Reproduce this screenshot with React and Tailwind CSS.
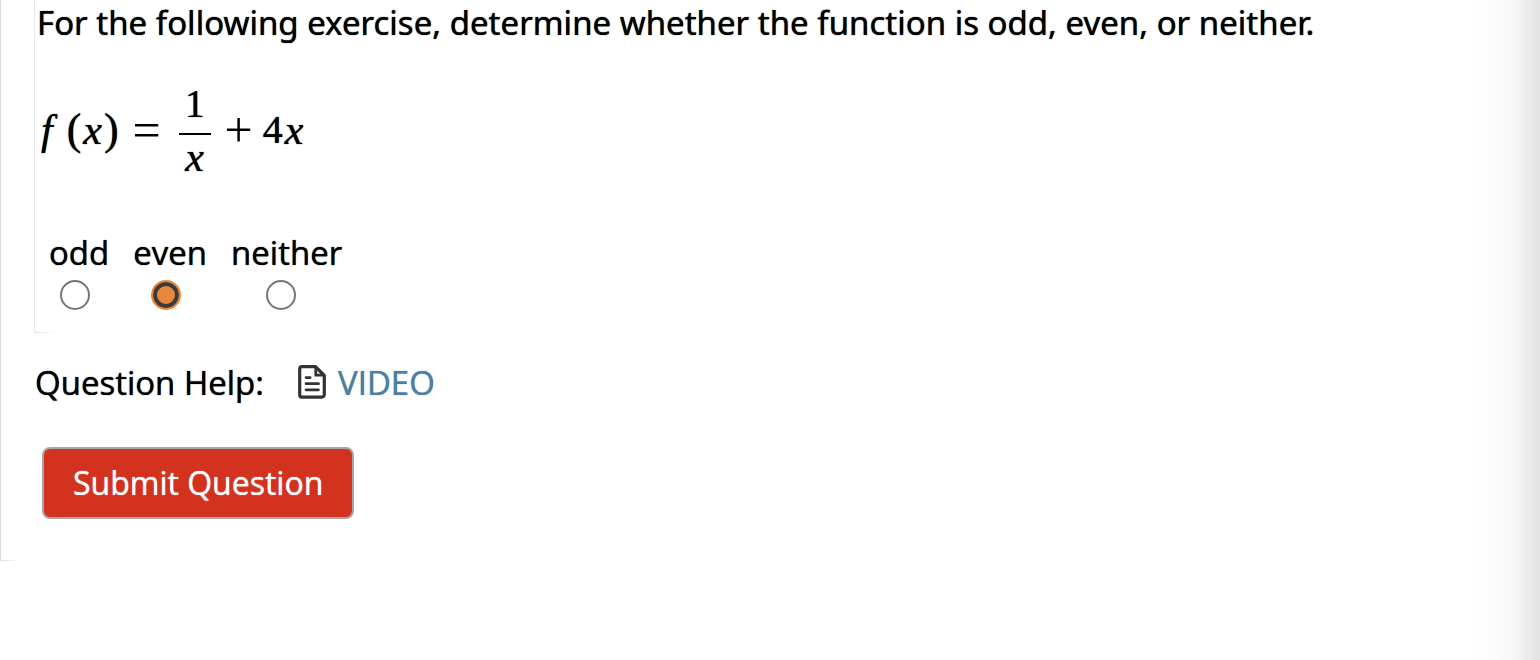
import { useState } from "react";

const choices = [
  { value: "odd", box: "pr-2" },
  { value: "even", box: "pr-2" },
  { value: "neither", box: "pr-3" },
];

function Formula() {
  return (
    <div
      role="math"
      aria-label="f(x) = 1/x + 4x"
      className="flex h-24 items-center pl-1 font-['Liberation_Serif',serif] text-[40px] leading-11 text-shadow-[0_0_1px_#000]"
    >
      <i className="pr-3.5 text-[42px] leading-11">f</i>
      <span className="text-[44px] leading-11">(</span>
      <i className="pr-0.5 pl-0.5 text-[42px] leading-11">x</i>
      <span className="text-[44px] leading-11">)</span>
      <span className="mr-1 w-14 text-center text-[50px] leading-11 text-shadow-none">=</span>
      <span className="flex w-8 flex-col items-center">
        <span className="pb-[7px]">1</span>
        <span className="h-0.5 w-full bg-black" />
        <i className="text-[42px] leading-11">x</i>
      </span>
      <span className="w-13 pl-1 text-center text-[50px] leading-11 text-shadow-none">+</span>
      <span>4</span>
      <i className="pl-0.5 text-[42px] leading-11">x</i>
    </div>
  );
}

function DocumentIcon() {
  return (
    <svg viewBox="0 0 28 34" className="h-[34px] w-7" fill="none" stroke="#333" aria-hidden="true">
      <path d="M4 1.7H17.5L26.3 10.5V29.8a2.3 2.3 0 0 1-2.3 2.3H4a2.3 2.3 0 0 1-2.3-2.3V4A2.3 2.3 0 0 1 4 1.7Z" strokeWidth="3.2" strokeLinejoin="round" />
      <path d="M17.8 2V10.2H26" strokeWidth="2.8" />
      <path d="M8 12.6h4.2M8 18.7h12.5M8 24.8h12.5" strokeWidth="2.7" strokeLinecap="round" />
    </svg>
  );
}

export default function App() {
  const [answer, setAnswer] = useState("even");
  return (
    <div className="flex min-h-screen justify-between bg-white font-['Open_Sans',sans-serif] text-[33px] leading-[46px] text-black">
      <main className="grow self-start">
        <div className="border-l border-[#dcdcdc] pb-[41px] pl-[33px]">
          <section className="border-l border-[#e8e8e8] pl-0.5">
            <h1 className="font-['Noto_Sans','Open_Sans',sans-serif] whitespace-nowrap text-shadow-[0_0_1px_#000]">
              For the following exercise, determine whether the function is odd, even, or neither.
            </h1>
            <div className="pt-9">
              <Formula />
            </div>
            <fieldset className="flex gap-6 pt-[52px] pb-[22px] pl-3">
              {choices.map(({ value, box }) => (
                <label key={value} className="flex flex-col items-center gap-1">
                  <span className="text-shadow-[0_0_1px_#000]">{value}</span>
                  <span className={`flex ${box}`}>
                    <input
                      type="radio"
                      name="parity"
                      value={value}
                      checked={answer === value}
                      onChange={() => setAnswer(value)}
                      className="size-[30px] appearance-none rounded-full border-2 border-[#757575] bg-white checked:border-[#e9873a] checked:bg-[#e9873a] checked:shadow-[inset_0_0_0_4px_#3b3b3b]"
                    />
                  </span>
                </label>
              ))}
            </fieldset>
            <div className="-ml-0.5 h-px w-5 bg-linear-to-r from-[#dcdcdc] to-white" />
          </section>
          <div className="flex items-center pt-[27px] pl-px">
            <span className="text-shadow-[0_0_1px_#000]">Question Help:</span>
            <span className="pr-3 pb-0.5 pl-[34px]">
              <DocumentIcon />
            </span>
            <a href="#video" className="text-[#4f7f9f] text-shadow-[0_0_1px_#4f7f9f]">VIDEO</a>
          </div>
          <button
            type="button"
            className="mt-[41px] ml-2 rounded-lg border-2 border-[#a6a6a6] bg-[#d2321e] px-[29px] py-3 text-[32px] leading-11 text-white text-shadow-[0_0_1px_#fff]"
          >
            Submit Question
          </button>
        </div>
        <div className="h-px w-5 bg-linear-to-r from-[#dcdcdc] to-white" />
      </main>
      <div className="w-[66px] shrink-0 bg-linear-to-r from-white via-[#f7f7f7] via-60% to-[#e2e2e2]" />
    </div>
  );
}
